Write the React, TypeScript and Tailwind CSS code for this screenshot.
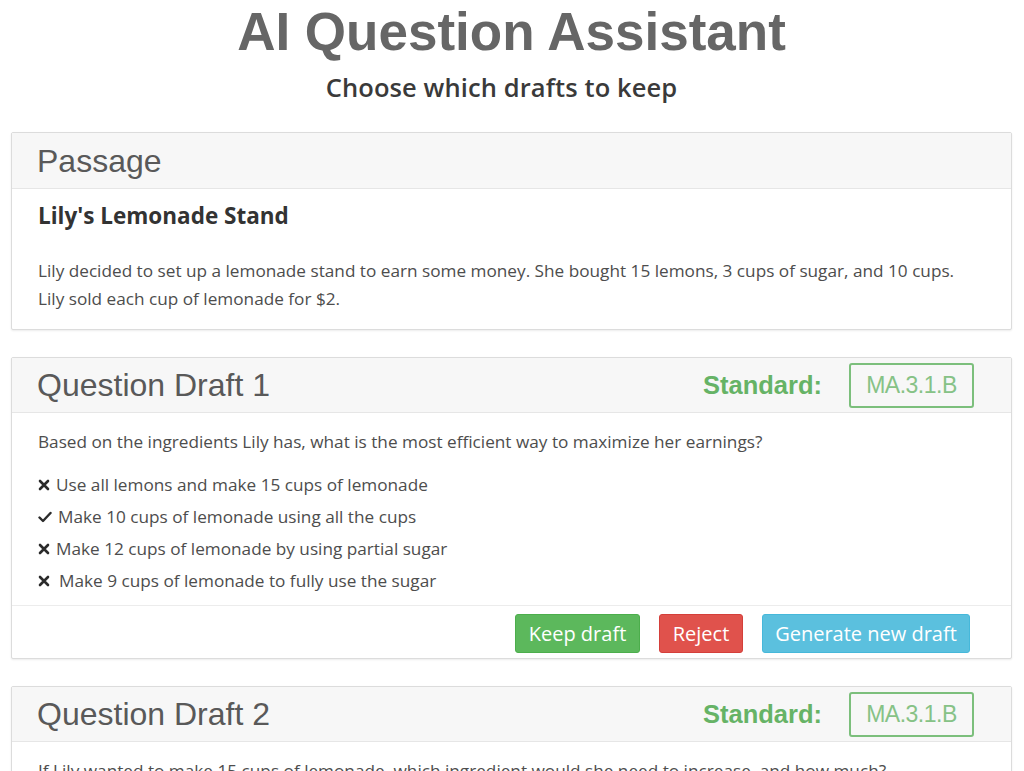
import React from "react";

const XIcon = () => (
  <svg width="12" height="12" viewBox="0 0 12 12" className="shrink-0">
    <path d="M2 2 L10 10 M10 2 L2 10" stroke="#2b2b2b" strokeWidth="2.6" strokeLinecap="round" />
  </svg>
);

const CheckIcon = () => (
  <svg width="14" height="12" viewBox="0 0 14 12" className="shrink-0">
    <path d="M1.5 6.5 L5 10 L12.5 2" stroke="#2b2b2b" strokeWidth="2.4" fill="none" strokeLinecap="round" strokeLinejoin="round" />
  </svg>
);

type Opt = { ok: boolean; text: string; extra?: boolean };

const Draft = ({ n, question, options, showFooter }: { n: number; question: string; options: Opt[]; showFooter: boolean }) => (
  <div className="border border-[#dcdcdc] bg-white shadow-[0_1px_2px_rgba(0,0,0,0.08)] rounded-[2px]">
    <div className="h-[55px] bg-[#f7f7f7] border-b border-[#e6e6e6] flex items-center pl-[25px] pr-[37px]">
      <div className="text-[32px] text-[#595959] font-['Liberation_Sans',Arial,sans-serif] leading-none">Question Draft {n}</div>
      <div className="ml-auto flex items-center">
        <div className="text-[25.5px] font-bold text-[#66b366] font-['Liberation_Sans',Arial,sans-serif] mr-[27px]">Standard:</div>
        <div className="w-[125px] h-[45px] border-2 border-[#7cbf7c] rounded-[3px] flex items-center justify-center text-[23px] text-[#86c286] font-['Liberation_Sans',Arial,sans-serif] tracking-[-0.5px]">MA.3.1.B</div>
      </div>
    </div>
    <div className="pl-[26px] pr-[26px] pt-[15px] pb-[8px] font-['Open_Sans',sans-serif] text-[17.2px] text-[#4d4d4d]">
      <div className="leading-[28px]">{question}</div>
      <div className="mt-[13px]">
        {options.map((o, i) => (
          <div key={i} className="h-[32px] flex items-center gap-[6px]">
            {o.ok ? <CheckIcon /> : <XIcon />}
            <span className={o.extra ? "ml-[3px]" : ""}>{o.text}</span>
          </div>
        ))}
      </div>
    </div>
    {showFooter && (
      <div className="border-t border-[#ececec] pt-[8px] pb-[5px] pr-[41px] flex justify-end gap-[19px] font-['Open_Sans',sans-serif] text-[20px] text-white">
        <button className="w-[125px] h-[39px] bg-[#5cb85c] border border-[#4cae4c] rounded-[3px]">Keep draft</button>
        <button className="w-[84px] h-[39px] bg-[#e0524c] border border-[#d43f3a] rounded-[3px]">Reject</button>
        <button className="w-[208px] h-[39px] bg-[#5bc0de] border border-[#46b8da] rounded-[3px]">Generate new draft</button>
      </div>
    )}
  </div>
);

export default function App() {
  return (
    <div className="min-h-[771px] bg-white pl-[11px] pr-[12px]">
      <div className="pt-[5px] text-center">
        <div className="text-[53px] leading-[54px] font-bold text-[#666666] font-['Liberation_Sans',Arial,sans-serif]">AI Question Assistant</div>
        <div className="mt-[13px] pr-[20px] text-[25.5px] leading-[30px] font-semibold text-[#3a3a3a] font-['Open_Sans',sans-serif] tracking-[0.1px]">Choose which drafts to keep</div>
      </div>
      <div className="mt-[30px] border border-[#dcdcdc] bg-white shadow-[0_1px_2px_rgba(0,0,0,0.08)] rounded-[2px]">
        <div className="h-[56px] bg-[#f7f7f7] border-b border-[#e6e6e6] flex items-center pl-[25px]">
          <div className="text-[32px] text-[#595959] font-['Liberation_Sans',Arial,sans-serif] leading-none">Passage</div>
        </div>
        <div className="pl-[26px] pr-[26px] pt-[13px] pb-[16px] font-['Open_Sans',sans-serif]">
          <div className="text-[22.5px] leading-[28px] font-bold text-[#333]">Lily's Lemonade Stand</div>
          <div className="mt-[27px] text-[17.2px] leading-[28px] text-[#4d4d4d]">
            Lily decided to set up a lemonade stand to earn some money. She bought 15 lemons, 3 cups of sugar, and 10 cups.
            <br />
            Lily sold each cup of lemonade for $2.
          </div>
        </div>
      </div>
      <div className="mt-[27px]">
        <Draft
          n={1}
          question="Based on the ingredients Lily has, what is the most efficient way to maximize her earnings?"
          options={[
            { ok: false, text: "Use all lemons and make 15 cups of lemonade" },
            { ok: true, text: "Make 10 cups of lemonade using all the cups" },
            { ok: false, text: "Make 12 cups of lemonade by using partial sugar" },
            { ok: false, text: "Make 9 cups of lemonade to fully use the sugar", extra: true },
          ]}
          showFooter
        />
      </div>
      <div className="mt-[27px]">
        <Draft
          n={2}
          question="If Lily wanted to make 15 cups of lemonade, which ingredient would she need to increase, and how much?"
          options={[
            { ok: false, text: "Lemons, by 5" },
            { ok: true, text: "Cups, by 5" },
            { ok: false, text: "Sugar, by 2 cups" },
            { ok: false, text: "Nothing needs to increase" },
          ]}
          showFooter
        />
      </div>
    </div>
  );
}
